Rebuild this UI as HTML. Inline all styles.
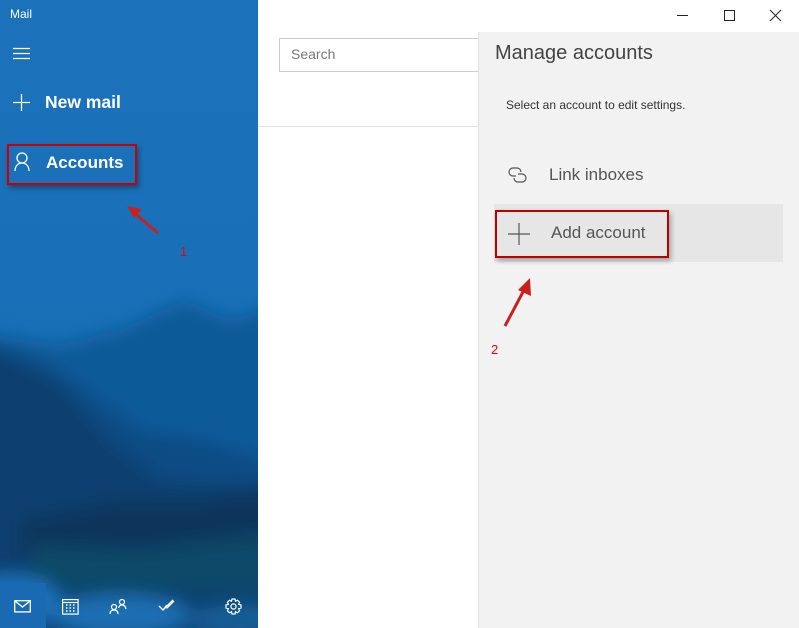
<!DOCTYPE html>
<html><head><meta charset="utf-8"><style>
*{margin:0;padding:0;box-sizing:border-box}
body{width:799px;height:628px;overflow:hidden;background:#fff;font-family:"Segoe UI","Liberation Sans",sans-serif;position:relative}
.abs{position:absolute}
#side{left:0;top:0;width:258px;height:628px;overflow:hidden;background:#1b74bd}
.w{color:#fff}
</style></head><body>
<div id="side" class="abs">
<svg width="258" height="628" style="position:absolute;left:0;top:0">
<defs><filter id="b" x="-50%" y="-50%" width="200%" height="200%"><feGaussianBlur stdDeviation="9"/></filter>
<linearGradient id="g" x1="0" y1="0" x2="0" y2="1"><stop offset="0" stop-color="#1b72bb"/><stop offset="0.45" stop-color="#1a70b8"/><stop offset="1" stop-color="#1a6cb0"/></linearGradient></defs>
<rect width="258" height="628" fill="url(#g)"/>
<g filter="url(#b)">
<polygon points="-40,330 60,345 120,330 185,300 230,320 300,300 300,660 -40,660" fill="#115a98"/>
<polygon points="-40,330 40,360 100,400 140,430 200,440 300,470 300,660 -40,660" fill="#0d4c84"/>
<polygon points="-40,335 60,380 110,440 160,480 300,490 300,660 -40,660" fill="#0a3f6f"/>
<polygon points="20,520 120,500 200,500 300,480 300,560 20,560" fill="#08345c"/>
<polygon points="30,545 140,550 300,530 300,590 30,590" fill="#0d4a68"/>
<ellipse cx="10" cy="600" rx="50" ry="25" fill="#1a72bb"/>
<ellipse cx="120" cy="615" rx="70" ry="20" fill="#1a6fb4"/>
<ellipse cx="240" cy="620" rx="50" ry="15" fill="#155f98"/>
</g>
<rect x="0" y="583" width="46" height="45" fill="#1a6ab3"/>
</svg>
<div class="abs w" style="left:10px;top:7px;font-size:12px">Mail</div>
<svg class="abs" style="left:13px;top:47px" width="18" height="14"><path d="M0 1.5H17M0 6.5H17M0 11.5H17" stroke="#fff" stroke-width="1.2"/></svg>
<svg class="abs" style="left:13px;top:94px" width="17" height="17"><path d="M8.5 0V17M0 8.5H17" stroke="#fff" stroke-width="1.3"/></svg>
<div class="abs w" style="left:45px;top:92px;font-size:17.5px;font-weight:bold">New mail</div>
<svg class="abs" style="left:14px;top:152px" width="17" height="20" fill="none" stroke="#fff" stroke-width="1.3"><circle cx="8" cy="6" r="5"/><path d="M1 19C1 14 4 11 8 11S15 14 15 19"/></svg>
<div class="abs w" style="left:46px;top:153px;font-size:17px;font-weight:bold">Accounts</div>
<div class="abs" style="left:7px;top:144px;width:130px;height:41px;border:2px solid #c00;box-shadow:2px 3px 5px rgba(0,0,0,.35)"></div>
<svg class="abs" style="left:120px;top:195px" width="50" height="45"><path d="M38 38L13 17" stroke="#c8201f" stroke-width="3"/><polygon points="7,11 22,14 14,23" fill="#c8201f"/></svg>
<div class="abs" style="left:180px;top:244px;color:#e00;font-size:13px">1</div>
<svg class="abs" style="left:14px;top:600px" width="17" height="13" fill="none" stroke="#fff" stroke-width="1.3"><rect x="0.7" y="0.7" width="15.6" height="11.2"/><path d="M1 1L8.5 7L16 1"/></svg>
<svg class="abs" style="left:62px;top:598px" width="17" height="17" fill="none" stroke="#fff" stroke-width="1.2"><rect x="0.6" y="1.6" width="15.5" height="14.5"/><path d="M0.6 4.5H16"/><path d="M4 7H5.5M7.5 7H9M11 7H12.5M4 10H5.5M7.5 10H9M11 10H12.5M4 13H5.5M7.5 13H9M11 13H12.5" stroke-width="1.5"/></svg>
<svg class="abs" style="left:109px;top:598px" width="18" height="18" fill="none" stroke="#fff" stroke-width="1.2"><circle cx="5" cy="9" r="2.5"/><path d="M1 16C1 13 3 12 5 12S9 13 9 16"/><circle cx="13" cy="4" r="2.5"/><path d="M9.5 10C10 8 11 7 13 7S16.5 8 17 11"/></svg>
<svg class="abs" style="left:158px;top:599px" width="18" height="14" fill="none" stroke="#fff" stroke-width="1.3"><path d="M1 7L5 11L9 6M5 11L15 1M7 7L9 9L16 2"/></svg>
<svg class="abs" style="left:225px;top:598px" width="17" height="17" fill="none" stroke="#fff" stroke-width="1.2"><circle cx="8.5" cy="8.5" r="2.6"/><path d="M7 1H10L10.5 3.2L12.5 2.2L14.6 4.3L13.6 6.3L16 7V10L13.6 10.6L14.6 12.7L12.5 14.8L10.5 13.8L10 16H7L6.5 13.8L4.5 14.8L2.4 12.7L3.4 10.6L1 10V7L3.4 6.3L2.4 4.3L4.5 2.2L6.5 3.2Z"/></svg>
</div>

<div class="abs" style="left:279px;top:38px;width:205px;height:34px;border:1px solid #ccc;background:#fff"></div>
<div class="abs" style="left:291px;top:46px;font-size:14px;color:#777">Search</div>
<div class="abs" style="left:258px;top:126px;width:221px;height:1px;background:#e2e2e2"></div>

<svg class="abs" style="left:677px;top:9px" width="110" height="12" fill="none" stroke="#222" stroke-width="1"><path d="M0 6.5H11"/><rect x="47.5" y="1.5" width="10" height="10"/><path d="M93 1L104 12M104 1L93 12"/></svg>

<div class="abs" style="left:478px;top:32px;width:321px;height:596px;background:#f2f2f2;border-left:1px solid #e0e0e0"></div>
<div class="abs" style="left:495px;top:42px;font-size:20px;color:#444">Manage accounts</div>
<div class="abs" style="left:506px;top:98px;font-size:12px;color:#333">Select an account to edit settings.</div>
<svg class="abs" style="left:508px;top:165px" width="24" height="20" fill="none" stroke="#555" stroke-width="1.2"><path d="M9 3H5A4 4 0 0 0 5 11H8M10 9H14A4 4 0 0 1 14 17H10A4 4 0 0 1 6 13"/><path d="M9 3A4 4 0 0 1 13 7"/></svg>
<div class="abs" style="left:549px;top:165px;font-size:17px;color:#555">Link inboxes</div>
<div class="abs" style="left:494px;top:204px;width:289px;height:58px;background:#e6e6e6"></div>
<svg class="abs" style="left:508px;top:223px" width="22" height="22"><path d="M11 0V22M0 11H22" stroke="#555" stroke-width="1.2"/></svg>
<div class="abs" style="left:551px;top:223px;font-size:17px;color:#555">Add account</div>
<div class="abs" style="left:495px;top:210px;width:174px;height:48px;border:2px solid #b00;box-shadow:2px 3px 5px rgba(0,0,0,.3)"></div>
<svg class="abs" style="left:500px;top:274px" width="40" height="55"><path d="M5 52L24 16" stroke="#c8201f" stroke-width="3"/><polygon points="30,4 31,22 18,16" fill="#c8201f"/></svg>
<div class="abs" style="left:491px;top:342px;color:#e00;font-size:13px">2</div>
</body></html>
